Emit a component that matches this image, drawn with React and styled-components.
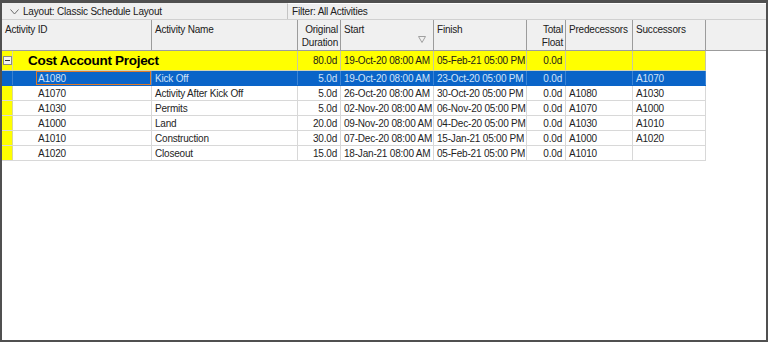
import styled, { createGlobalStyle } from "styled-components";

const GlobalStyle = createGlobalStyle`
	html, body {
		margin: 0;
		padding: 0;
		background: #ffffff;
	}
	body {
		font-family: "Liberation Sans", Arial, sans-serif;
		font-size: 10px;
		letter-spacing: -0.2px;
		color: #1e1e1e;
	}
`;

const columns = [
	{ key: "id", width: 139 },
	{ key: "name", width: 146 },
	{ key: "dur", width: 43, right: true },
	{ key: "start", width: 93 },
	{ key: "finish", width: 93 },
	{ key: "float", width: 39, right: true },
	{ key: "pred", width: 67 },
	{ key: "succ", width: 73 },
];

const activities = [
	{ id: "A1080", name: "Kick Off", dur: "5.0d", start: "19-Oct-20 08:00 AM", finish: "23-Oct-20 05:00 PM", float: "0.0d", pred: "", succ: "A1070", selected: true },
	{ id: "A1070", name: "Activity After Kick Off", dur: "5.0d", start: "26-Oct-20 08:00 AM", finish: "30-Oct-20 05:00 PM", float: "0.0d", pred: "A1080", succ: "A1030" },
	{ id: "A1030", name: "Permits", dur: "5.0d", start: "02-Nov-20 08:00 AM", finish: "06-Nov-20 05:00 PM", float: "0.0d", pred: "A1070", succ: "A1000" },
	{ id: "A1000", name: "Land", dur: "20.0d", start: "09-Nov-20 08:00 AM", finish: "04-Dec-20 05:00 PM", float: "0.0d", pred: "A1030", succ: "A1010" },
	{ id: "A1010", name: "Construction", dur: "30.0d", start: "07-Dec-20 08:00 AM", finish: "15-Jan-21 05:00 PM", float: "0.0d", pred: "A1000", succ: "A1020" },
	{ id: "A1020", name: "Closeout", dur: "15.0d", start: "18-Jan-21 08:00 AM", finish: "05-Feb-21 05:00 PM", float: "0.0d", pred: "A1010", succ: "" },
];

const App = () => {
	return (
		<>
			<GlobalStyle />
			<Frame>
				<FilterBar>
					<LayoutSection>
						<svg width="9" height="6" viewBox="0 0 9 6">
							<polyline points="0.5,0.5 4.5,5 8.5,0.5" fill="none" stroke="#6a6a6a" strokeWidth="1" />
						</svg>
						<span>Layout: Classic Schedule Layout</span>
					</LayoutSection>
					<FilterSection>Filter: All Activities</FilterSection>
				</FilterBar>

				<HeaderRow>
					<HeaderCell $w={150}>Activity ID</HeaderCell>
					<HeaderCell $w={146}>Activity Name</HeaderCell>
					<HeaderCell $w={43} $right>
						Original
						<br />
						Duration
					</HeaderCell>
					<HeaderCell $w={93}>
						Start
						<SortMark width="8" height="7" viewBox="0 0 8 7">
							<polygon points="0.5,0.5 7.5,0.5 4,6.5" fill="none" stroke="#a0a0a0" strokeWidth="1" />
						</SortMark>
					</HeaderCell>
					<HeaderCell $w={93}>Finish</HeaderCell>
					<HeaderCell $w={39} $right>
						Total
						<br />
						Float
					</HeaderCell>
					<HeaderCell $w={67}>Predecessors</HeaderCell>
					<HeaderCell $w={73}>Successors</HeaderCell>
				</HeaderRow>

				<ProjectRow>
					<Gutter $color="#ffff00">
						<Collapse />
					</Gutter>
					<ProjectTitle>Cost Account Project</ProjectTitle>
					<ProjectCell $w={43} $right>80.0d</ProjectCell>
					<ProjectCell $w={93}>19-Oct-20 08:00 AM</ProjectCell>
					<ProjectCell $w={93}>05-Feb-21 05:00 PM</ProjectCell>
					<ProjectCell $w={39} $right>0.0d</ProjectCell>
					<ProjectCell $w={67} />
					<ProjectCell $w={73} />
				</ProjectRow>

				{activities.map((a) => (
					<Row key={a.id} $selected={a.selected}>
						<Gutter $color={a.selected ? "#0a64c8" : "#ffff00"} />
						{columns.map((col) =>
							col.key === "id" ? (
								<IdCell key={col.key} $w={col.width} $selected={a.selected}>
									<IdBox $focused={a.selected}>{a.id}</IdBox>
								</IdCell>
							) : (
								<Cell key={col.key} $w={col.width} $right={col.right} $selected={a.selected}>
									{a[col.key]}
								</Cell>
							)
						)}
					</Row>
				))}
			</Frame>
		</>
	);
};

export default App;

const Frame = styled.div`
	box-sizing: border-box;
	width: 768px;
	height: 342px;
	border: 2px solid #505050;
	border-top-width: 3px;
	background: #ffffff;
	overflow: hidden;
`;

const FilterBar = styled.div`
	display: flex;
	height: 16px;
	background: #efefef;
	border-bottom: 1px solid #d0d0d0;
	color: #202020;
`;

const LayoutSection = styled.div`
	display: flex;
	align-items: center;
	gap: 4px;
	width: 277px;
	padding-left: 8px;
	svg {
		margin-top: 1px;
	}
`;

const FilterSection = styled.div`
	display: flex;
	align-items: center;
	flex: 1;
	padding-left: 4px;
	border-left: 1px solid #c4c4c4;
	border-top: 1px solid #ffffff;
`;

const HeaderRow = styled.div`
	display: flex;
	height: 30px;
	background: #f0f0f0;
	border-bottom: 1px solid #9c9c9c;
`;

const HeaderCell = styled.div`
	position: relative;
	box-sizing: border-box;
	width: ${(p) => p.$w}px;
	flex: none;
	padding: 3px 2px 0 3px;
	border-right: 1px solid #9c9c9c;
	text-align: ${(p) => (p.$right ? "right" : "left")};
	line-height: 13px;
	white-space: nowrap;
	overflow: hidden;
	color: #202020;
`;

const SortMark = styled.svg`
	position: absolute;
	right: 7px;
	bottom: 7px;
`;

const ProjectRow = styled.div`
	display: flex;
	height: 19px;
	width: 704px;
	background: #ffff00;
	border-bottom: 1px solid #d6d6b0;
`;

const Gutter = styled.div`
	box-sizing: border-box;
	flex: none;
	width: 11px;
	background: ${(p) => p.$color};
	border-right: 1px solid ${(p) => (p.$color === "#ffff00" ? "#d8d8a0" : "#3a80d0")};
	display: flex;
	align-items: center;
	justify-content: center;
`;

const Collapse = styled.span`
	position: relative;
	box-sizing: border-box;
	width: 9px;
	height: 9px;
	border: 1px solid #8a8a8a;
	background: #f4f4f4;
	&::after {
		content: "";
		position: absolute;
		left: 1px;
		right: 1px;
		top: 3px;
		height: 1px;
		background: #333;
	}
`;

const ProjectTitle = styled.div`
	box-sizing: border-box;
	flex: none;
	width: 285px;
	padding-left: 15px;
	font-size: 13.5px;
	letter-spacing: -0.3px;
	font-weight: bold;
	display: flex;
	align-items: center;
	color: #000;
	border-right: 1px solid #c8c8a0;
	white-space: nowrap;
`;

const ProjectCell = styled.div`
	box-sizing: border-box;
	flex: none;
	width: ${(p) => p.$w}px;
	padding: 0 3px;
	display: flex;
	align-items: center;
	justify-content: ${(p) => (p.$right ? "flex-end" : "flex-start")};
	border-right: 1px solid #c8c8a0;
	white-space: nowrap;
	overflow: hidden;
	color: #1a1a1a;
`;

const Row = styled.div`
	display: flex;
	height: 15px;
	width: 704px;
	background: ${(p) => (p.$selected ? "#0a64c8" : "#ffffff")};
	border-bottom: 1px solid ${(p) => (p.$selected ? "#0a64c8" : "#d8d8d8")};
	box-sizing: border-box;
`;

const Cell = styled.div`
	box-sizing: border-box;
	flex: none;
	width: ${(p) => p.$w}px;
	padding: 0 3px;
	display: flex;
	align-items: center;
	justify-content: ${(p) => (p.$right ? "flex-end" : "flex-start")};
	border-right: 1px solid ${(p) => (p.$selected ? "#3c84d4" : "#d8d8d8")};
	color: ${(p) => (p.$selected ? "#cfe2f8" : "#1e1e1e")};
	white-space: nowrap;
	overflow: hidden;
`;

const IdCell = styled(Cell)`
	padding: 0 0 0 23px;
	align-items: stretch;
`;

const IdBox = styled.div`
	box-sizing: border-box;
	flex: 1 1 auto;
	width: 100%;
	display: flex;
	align-items: center;
	padding-left: 1px;
	border: 1px solid ${(p) => (p.$focused ? "#e07a28" : "transparent")};
`;
